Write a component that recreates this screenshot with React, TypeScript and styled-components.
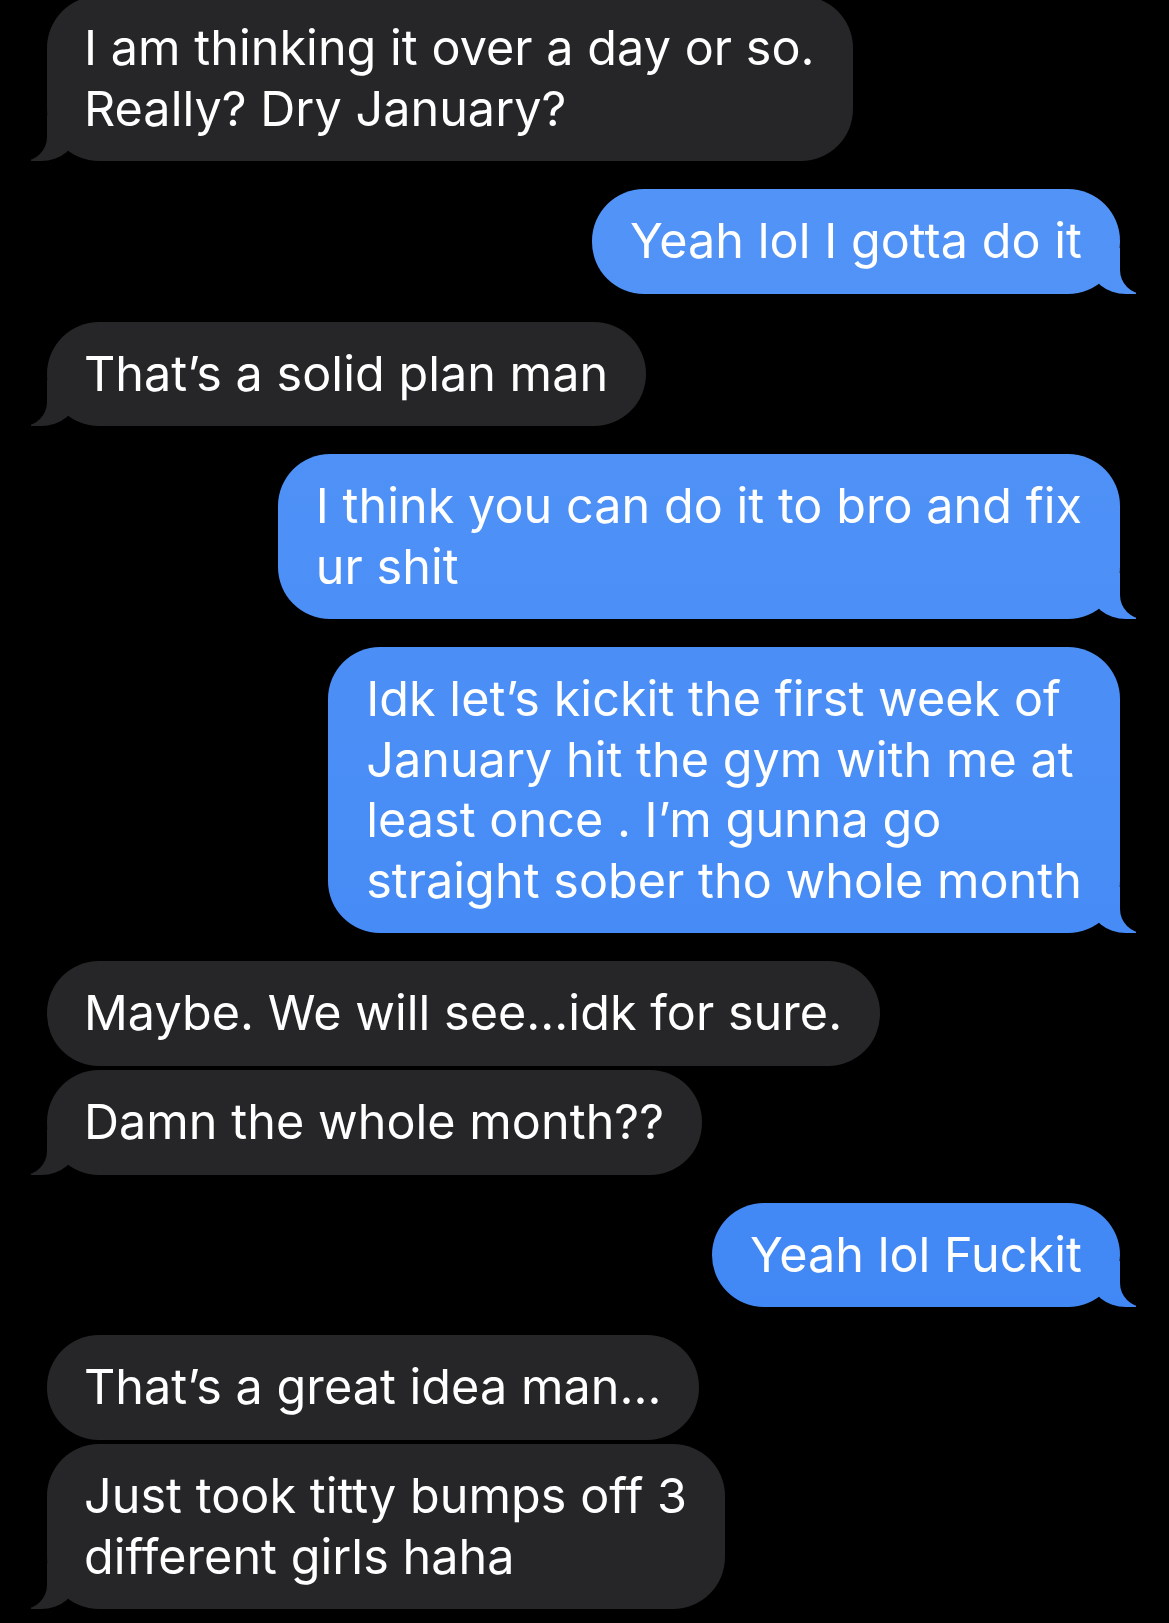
import React from "react";
import styled, { createGlobalStyle, css } from "styled-components";

const Global = createGlobalStyle`
  html, body {
    margin: 0;
    padding: 0;
    background: #000;
  }
  body {
    font-family: Inter, "Noto Sans", "Liberation Sans", sans-serif;
    -webkit-font-smoothing: antialiased;
  }
`;

const Thread = styled.div`
  display: flex;
  flex-direction: column;
  padding: 0 49px 0 47px;
  margin-top: -4px;
  overflow: hidden;
  min-height: 1627px;
  background: #000;
`;

const Group = styled.div<{ $me: boolean }>`
  display: flex;
  flex-direction: column;
  align-items: ${(p) => (p.$me ? "flex-end" : "flex-start")};
  gap: 4.5px;
  & + & {
    margin-top: 28px;
  }
`;

const Bubble = styled.div<{ $me: boolean; $tail: boolean }>`
  position: relative;
  box-sizing: border-box;
  padding: 22px 38px 22px ${(p) => (p.$me ? 38 : 37)}px;
  border-radius: 52px;
  color: #fff;
  font-size: 48.5px;
  line-height: 60.5px;
  letter-spacing: 0.05px;
  font-weight: 400;
  ${(p) =>
    p.$me
      ? css`
          background: linear-gradient(180deg, #5595f7 0%, #4a8ef6 45%, #3c85f5 100%) fixed;
        `
      : css`
          background: #262628;
        `}

  ${(p) =>
    p.$tail &&
    (p.$me
      ? css`
          &::before {
            content: "";
            position: absolute;
            bottom: 0;
            right: -16px;
            width: 46px;
            height: 46px;
            background: inherit;
            border-bottom-left-radius: 36px 30px;
            z-index: 0;
          }
          &::after {
            content: "";
            position: absolute;
            bottom: 0;
            right: -60px;
            width: 60px;
            height: 46px;
            background: #000;
            border-bottom-left-radius: 24px;
            z-index: 1;
          }
        `
      : css`
          &::before {
            content: "";
            position: absolute;
            bottom: 0;
            left: -16px;
            width: 46px;
            height: 46px;
            background: inherit;
            border-bottom-right-radius: 36px 30px;
            z-index: 0;
          }
          &::after {
            content: "";
            position: absolute;
            bottom: 0;
            left: -60px;
            width: 60px;
            height: 46px;
            background: #000;
            border-bottom-right-radius: 24px;
            z-index: 1;
          }
        `)}
`;

const Line = styled.span`
  position: relative;
  z-index: 2;
  display: block;
  white-space: nowrap;
`;

type Msg = { lines: string[] };
type G = { me: boolean; msgs: Msg[] };

const groups: G[] = [
  { me: false, msgs: [{ lines: ["I am thinking it over a day or so.", "Really? Dry January?"] }] },
  { me: true, msgs: [{ lines: ["Yeah lol I gotta do it"] }] },
  { me: false, msgs: [{ lines: ["That\u2019s a solid plan man"] }] },
  { me: true, msgs: [{ lines: ["I think you can do it to bro and fix", "ur shit"] }] },
  {
    me: true,
    msgs: [
      {
        lines: [
          "Idk let\u2019s kickit the first week of",
          "January hit the gym with me at",
          "least once . I\u2019m gunna go",
          "straight sober tho whole month",
        ],
      },
    ],
  },
  {
    me: false,
    msgs: [
      { lines: ["Maybe. We will see...idk for sure."] },
      { lines: ["Damn the whole month??"] },
    ],
  },
  { me: true, msgs: [{ lines: ["Yeah lol Fuckit"] }] },
  {
    me: false,
    msgs: [
      { lines: ["That\u2019s a great idea man..."] },
      { lines: ["Just took titty bumps off 3", "different girls haha"] },
    ],
  },
];

export default function App() {
  return (
    <>
      <Global />
      <Thread>
        {groups.map((g, gi) => (
          <Group key={gi} $me={g.me}>
            {g.msgs.map((m, mi) => (
              <Bubble key={mi} $me={g.me} $tail={mi === g.msgs.length - 1}>
                {m.lines.map((l, li) => (
                  <Line key={li}>{l}</Line>
                ))}
              </Bubble>
            ))}
          </Group>
        ))}
      </Thread>
    </>
  );
}
